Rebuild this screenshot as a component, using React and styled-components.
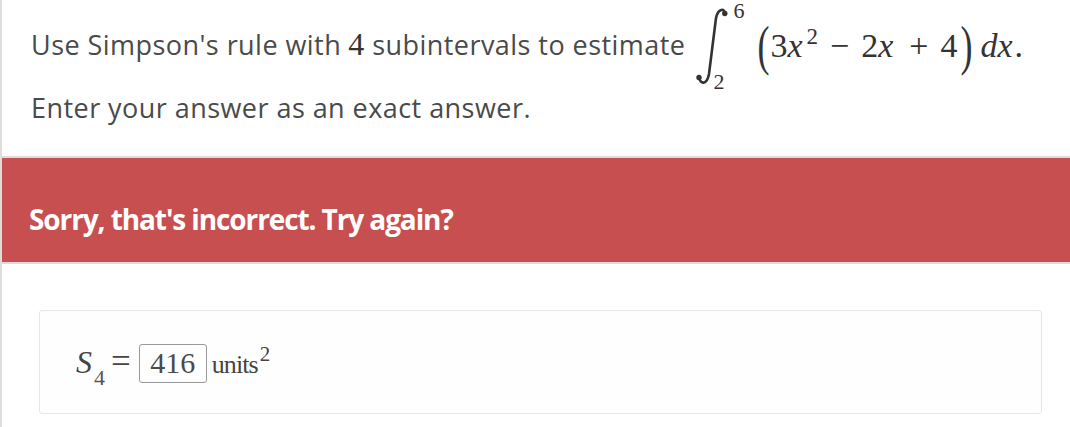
import React from "react"
import styled, { createGlobalStyle } from "styled-components"

const GlobalStyle = createGlobalStyle`
  html, body {
    margin: 0;
    padding: 0;
    background: #fff;
  }
  body {
    font-family: "Open Sans", "Liberation Sans", sans-serif;
    color: #4a4a4a;
  }
`

const Page = styled.div`
  border-left: 2px solid #dddddd;
  min-height: 427px;
  box-sizing: border-box;
`

const Question = styled.div`
  padding: 0 0 0 29px;
`

const Line = styled.div`
  display: flex;
  align-items: center;
  height: ${(p) => p.h}px;
  font-size: 27px;
  letter-spacing: 0.45px;
  white-space: nowrap;
`

const Num = styled.span`
  font-family: "Liberation Serif", "DejaVu Serif", serif;
  font-size: 32px;
  letter-spacing: 0;
  margin: 0 8px 0 7px;
  color: #333;
`

const Math = styled.span`
  display: inline-flex;
  align-items: center;
  font-family: "Liberation Serif", "DejaVu Serif", serif;
  letter-spacing: 0;
  color: #333;
  margin-left: 9px;
`

const IntegralBox = styled.span`
  display: inline-flex;
  align-items: flex-start;
  height: 89px;
  margin-right: 13px;
`

const Limits = styled.span`
  display: flex;
  flex-direction: column;
  justify-content: space-between;
  height: 89px;
  font-size: 22px;
  line-height: 22px;
`

const Limit = styled.span`
  margin-left: ${(p) => p.ml}px;
  margin-bottom: ${(p) => p.mb || 0}px;
`

const Expr = styled.span`
  font-size: 34px;
  line-height: 1;
  white-space: nowrap;
`

const Paren = styled.span`
  display: inline-block;
  transform: scaleY(1.55);
  font-size: 36px;
  margin: 0 ${(p) => p.r || 0}px 0 ${(p) => p.l || 0}px;
`

const Var = styled.i`
  font-style: italic;
  margin-right: ${(p) => p.mr || 0}px;
`

const Sup = styled.sup`
  font-size: 23px;
  line-height: 0;
  vertical-align: 13px;
  margin-left: 0;
`

const Op = styled.span`
  margin: 0 ${(p) => p.m || 10}px;
`

const Banner = styled.div`
  background: #c84f50;
  border-top: 2px solid #dcdcdc;
  border-bottom: 2px solid #dcdcdc;
  height: 104px;
  margin-top: 30px;
  padding-left: 27px;
  color: #fff;
  font-weight: 700;
  font-size: 28px;
  line-height: 38px;
  letter-spacing: -1.1px;
  white-space: nowrap;
`

const BannerText = styled.div`
  padding-top: 42px;
`

const CardWrap = styled.div`
  padding: 46px 28px 0 37px;
`

const Card = styled.div`
  border: 1px solid #e6e6e6;
  border-radius: 3px;
  height: 102px;
  display: flex;
  align-items: center;
  padding-left: 36px;
  background: #fefefe;
`

const Answer = styled.span`
  display: inline-flex;
  align-items: baseline;
  font-family: "Liberation Serif", "DejaVu Serif", serif;
  font-size: 32px;
  line-height: 1;
  color: #444;
  margin-top: 2px;
`

const Sub = styled.span`
  font-size: 22px;
  color: #555;
  position: relative;
  top: 12px;
  margin-left: 2px;
`

const Equals = styled.span`
  font-size: 35px;
  margin: 0 8px 0 6px;
`

const Input = styled.span`
  display: inline-flex;
  align-items: center;
  justify-content: center;
  width: 68px;
  height: 39px;
  border: 1px solid #999;
  border-radius: 3px;
  margin-right: 5px;
  box-sizing: border-box;
  color: #4a4a4a;
  font-size: 30px;
`

const Units = styled.span`
  font-size: 26px;
  letter-spacing: -0.9px;
`

const UnitsSup = styled.span`
  font-size: 21px;
  position: relative;
  top: -12px;
  margin-left: 2px;
`

const IntegralSign = () => (
  <svg width="36" height="80" viewBox="0 0 36 80" style={{ marginTop: 6 }}>
    <path
      d="M5 71 C6 79 13 79 15 68 L22 12 C24 2 31 2 31 8"
      fill="none"
      stroke="#333"
      strokeWidth="2.6"
      strokeLinecap="round"
    />
    <circle cx="5" cy="71.5" r="2.7" fill="#333" />
    <circle cx="30.8" cy="7.5" r="2.7" fill="#333" />
  </svg>
)

export default function App() {
  return (
    <>
      <GlobalStyle />
      <Page>
        <Question>
          <Line h={89}>
            Use Simpson's rule with<Num>4</Num>subintervals to estimate
            <Math>
              <IntegralBox>
                <IntegralSign />
                <Limits>
                  <Limit ml={3}>6</Limit>
                  <Limit ml={-17} mb={-4}>2</Limit>
                </Limits>
              </IntegralBox>
              <Expr>
                <Paren r={1}>(</Paren>
                3<Var mr={4}>x</Var>
                <Sup>2</Sup>
                <Op m={12}>−</Op>2<Var mr={4}>x</Var>
                <Op m={12}>+</Op>4
                <Paren l={3} r={8}>)</Paren>
                <Var>d</Var>
                <Var mr={2}>x</Var>.
              </Expr>
            </Math>
          </Line>
          <Line h={37}>Enter your answer as an exact answer.</Line>
        </Question>
        <Banner>
          <BannerText>Sorry, that's incorrect. Try again?</BannerText>
        </Banner>
        <CardWrap>
          <Card>
            <Answer>
              <Var>S</Var>
              <Sub>4</Sub>
              <Equals>=</Equals>
              <Input>416</Input>
              <Units>
                units<UnitsSup>2</UnitsSup>
              </Units>
            </Answer>
          </Card>
        </CardWrap>
      </Page>
    </>
  )
}
